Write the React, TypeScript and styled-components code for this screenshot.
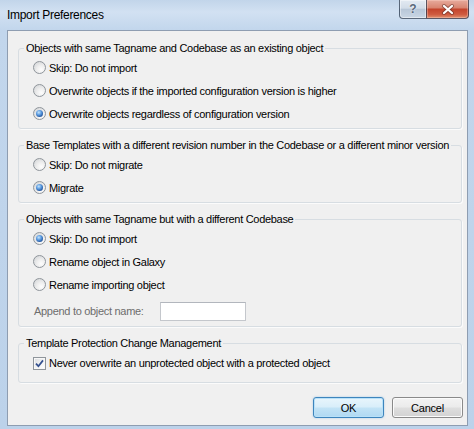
import React from "react";
import styled, { createGlobalStyle } from "styled-components";

const GlobalStyle = createGlobalStyle`
  html, body {
    margin: 0;
    padding: 0;
    background: #c3d7ed;
  }
  body {
    font-family: "Liberation Sans", Arial, sans-serif;
    color: #000;
  }
`;

type Option = { label: string; checked?: boolean };

const groups: { title: string; options: Option[] }[] = [
  {
    title: "Objects with same Tagname and Codebase as an existing object",
    options: [
      { label: "Skip: Do not import" },
      { label: "Overwrite objects if the imported configuration version is higher" },
      { label: "Overwrite objects regardless of configuration version", checked: true },
    ],
  },
  {
    title:
      "Base Templates with a different revision number in the Codebase or a different minor version",
    options: [{ label: "Skip: Do not migrate" }, { label: "Migrate", checked: true }],
  },
];

const renameOptions: Option[] = [
  { label: "Skip: Do not import", checked: true },
  { label: "Rename object in Galaxy" },
  { label: "Rename importing object" },
];

const CloseGlyph = () => (
  <svg width="14" height="11" viewBox="0 0 14 11">
    <path
      d="M3 2 L11 9 M11 2 L3 9"
      stroke="#5a2b24"
      strokeWidth="4"
      strokeLinecap="round"
      fill="none"
      opacity="0.55"
    />
    <path
      d="M3 2 L11 9 M11 2 L3 9"
      stroke="#ffffff"
      strokeWidth="2.2"
      strokeLinecap="round"
      fill="none"
    />
  </svg>
);

const CheckGlyph = () => (
  <svg width="11" height="11" viewBox="0 0 11 11">
    <path
      d="M2 5.6 L4.4 8.2 L9 2.4"
      stroke="#34508f"
      strokeWidth="1.7"
      fill="none"
    />
  </svg>
);

const RadioRow = ({ label, checked }: Option) => (
  <Row>
    <RadioDot $checked={!!checked} />
    <RowLabel>{label}</RowLabel>
  </Row>
);

const App = () => {
  return (
    <>
      <GlobalStyle />
      <Window>
        <TitleBar>
          <Title>Import Preferences</Title>
          <CaptionButtons>
            <HelpButton>?</HelpButton>
            <CloseButton>
              <CloseGlyph />
            </CloseButton>
          </CaptionButtons>
        </TitleBar>
        <Client>
          {groups.map((group) => (
            <GroupBox key={group.title}>
              <Legend>{group.title}</Legend>
              {group.options.map((option) => (
                <RadioRow key={option.label} {...option} />
              ))}
            </GroupBox>
          ))}
          <GroupBox>
            <Legend>Objects with same Tagname but with a different Codebase</Legend>
            {renameOptions.map((option) => (
              <RadioRow key={option.label} {...option} />
            ))}
            <AppendRow>
              <DisabledLabel>Append to object name:</DisabledLabel>
              <TextBox />
            </AppendRow>
          </GroupBox>
          <GroupBox $last>
            <Legend>Template Protection Change Management</Legend>
            <Row $tall>
              <CheckBox>
                <CheckGlyph />
              </CheckBox>
              <RowLabel>Never overwrite an unprotected object with a protected object</RowLabel>
            </Row>
          </GroupBox>
          <ButtonRow>
            <DialogButton $default>OK</DialogButton>
            <DialogButton>Cancel</DialogButton>
          </ButtonRow>
        </Client>
      </Window>
    </>
  );
};

export default App;

const Window = styled.div`
  width: 474px;
  height: 429px;
  display: flex;
  flex-direction: column;
  background: linear-gradient(
    180deg,
    #c2d5ea 0px,
    #d2e1f2 12px,
    #c2d6ec 30px,
    #bcd2ea 100%
  );
  overflow: hidden;
`;

const TitleBar = styled.div`
  height: 30px;
  display: flex;
  align-items: flex-start;
  flex-shrink: 0;
`;

const Title = styled.div`
  flex: 1;
  padding-left: 7px;
  font-size: 12px;
  letter-spacing: -0.3px;
  line-height: 30px;
`;

const CaptionButtons = styled.div`
  display: flex;
  margin-right: 5px;
`;

const CaptionButton = styled.div`
  height: 19px;
  box-sizing: border-box;
  border: 1px solid rgba(45, 60, 82, 0.75);
  border-top: none;
  display: flex;
  align-items: center;
  justify-content: center;
`;

const HelpButton = styled(CaptionButton)`
  width: 27px;
  border-right: none;
  border-radius: 0 0 0 4px;
  background: linear-gradient(
    180deg,
    #e3eaf2 0%,
    #d3dde8 45%,
    #b8c7d8 52%,
    #c9d6e4 100%
  );
  box-shadow: inset 0 0 0 1px rgba(255, 255, 255, 0.45);
  font-size: 12px;
  font-weight: bold;
  color: #5a687b;
  text-shadow: 0 0 2px #fff;
`;

const CloseButton = styled(CaptionButton)`
  width: 43px;
  border-radius: 0 0 4px 0;
  background: linear-gradient(
    180deg,
    #e7ab9d 0%,
    #d98672 42%,
    #c4452d 52%,
    #cf5b40 80%,
    #e08f6e 100%
  );
  box-shadow: inset 0 0 0 1px rgba(255, 220, 210, 0.35);
`;

const Client = styled.div`
  flex: 1;
  margin: 0 6px 3px 7px;
  border: 1px solid #8e9db1;
  background: #f0f0f0;
  padding: 17px 5px 0 10px;
  display: flex;
  flex-direction: column;
  gap: 16px;
`;

const GroupBox = styled.div<{ $last?: boolean }>`
  border: 1px solid #d7dde2;
  border-radius: 3px;
  box-shadow: 1px 1px 0 #fbfbfb;
  padding: 0 0 ${({ $last }) => ($last ? "7px" : "3px")} 0;
`;

const Legend = styled.div`
  width: fit-content;
  margin: -8px 0 0 5px;
  padding: 0 2px;
  background: #f0f0f0;
  font-size: 11px;
  letter-spacing: -0.3px;
  line-height: 15px;
  white-space: nowrap;
`;

const Row = styled.div<{ $tall?: boolean }>`
  height: ${({ $tall }) => ($tall ? "24px" : "23px")};
  display: flex;
  align-items: center;
  padding-left: 14px;
  gap: 3px;
`;

const RowLabel = styled.span`
  font-size: 11px;
  letter-spacing: -0.3px;
  white-space: nowrap;
`;

const RadioDot = styled.span<{ $checked: boolean }>`
  width: 13px;
  height: 13px;
  box-sizing: border-box;
  border-radius: 50%;
  border: 1px solid #8f959b;
  background: radial-gradient(
    circle at 65% 70%,
    #fdfdfd 0%,
    #eeeeee 40%,
    #cdd0d3 100%
  );
  display: flex;
  align-items: center;
  justify-content: center;
  flex-shrink: 0;

  &::after {
    content: "";
    display: ${({ $checked }) => ($checked ? "block" : "none")};
    width: 7px;
    height: 7px;
    border-radius: 50%;
    background: radial-gradient(
      circle at 40% 35%,
      #c4e4fb 0%,
      #5a9ae0 40%,
      #1a4a92 80%,
      #0f3570 100%
    );
  }
`;

const CheckBox = styled.span`
  width: 13px;
  height: 13px;
  box-sizing: border-box;
  border: 1px solid #8f959b;
  background: linear-gradient(135deg, #d9dbde 0%, #f2f3f4 55%, #ffffff 100%);
  box-shadow: inset 0 0 0 1px #f7f7f7;
  display: flex;
  align-items: center;
  justify-content: center;
  flex-shrink: 0;
`;

const AppendRow = styled.div`
  height: 24px;
  margin-top: 3px;
  display: flex;
  align-items: center;
  padding-left: 15px;
`;

const DisabledLabel = styled.span`
  width: 126px;
  font-size: 11px;
  letter-spacing: -0.3px;
  color: #6d6d6d;
  white-space: nowrap;
`;

const TextBox = styled.div`
  width: 86px;
  height: 19px;
  box-sizing: border-box;
  border: 1px solid #c4c7cc;
  border-top-color: #b2b6bd;
  background: #fff;
`;

const ButtonRow = styled.div`
  display: flex;
  justify-content: flex-end;
  gap: 8px;
  margin-top: -2px;
  margin-right: -1px;
`;

const DialogButton = styled.div<{ $default?: boolean }>`
  width: 71px;
  height: 21px;
  box-sizing: border-box;
  border-radius: 3px;
  display: flex;
  align-items: center;
  justify-content: center;
  font-size: 11px;
  letter-spacing: -0.2px;
  border: 1px solid ${({ $default }) => ($default ? "#3d85bd" : "#8a8a8a")};
  background: ${({ $default }) =>
    $default
      ? "linear-gradient(180deg, #e8f5fc 0%, #d8eefa 48%, #c2e3f6 52%, #afd9f2 100%)"
      : "linear-gradient(180deg, #f3f3f3 0%, #ebebeb 48%, #dedede 52%, #d2d2d2 100%)"};
  box-shadow: ${({ $default }) =>
    $default
      ? "inset 0 0 0 1px #b9e1f8, 0 0 2px rgba(80, 160, 220, 0.5)"
      : "inset 0 0 0 1px #fbfbfb"};
`;
